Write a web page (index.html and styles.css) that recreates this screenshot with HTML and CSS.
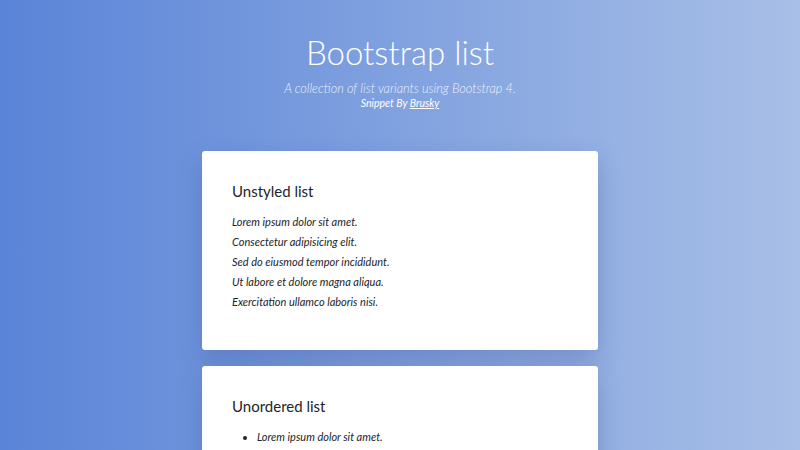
FILE: index.html
```html
<!DOCTYPE html>
<html lang="en">
<head>
    <meta charset="UTF-8">
    <meta name="viewport" content="width=device-width, initial-scale=1.0">
    <title>Bootstrap list</title>
    <link rel="stylesheet" href="styles.css">
</head>
<body>
    <div class="container">
        <header class="hero">
            <h1>Bootstrap list</h1>
            <p class="lead">A collection of list variants using Bootstrap 4.</p>
            <p class="credit">Snippet By <a href="#">Brusky</a></p>
        </header>

        <div class="card">
            <h5>Unstyled list</h5>
            <ul class="list-unstyled">
                <li>Lorem ipsum dolor sit amet.</li>
                <li>Consectetur adipisicing elit.</li>
                <li>Sed do eiusmod tempor incididunt.</li>
                <li>Ut labore et dolore magna aliqua.</li>
                <li>Exercitation ullamco laboris nisi.</li>
            </ul>
        </div>

        <div class="card">
            <h5>Unordered list</h5>
            <ul class="list-bullets">
                <li>Lorem ipsum dolor sit amet.</li>
                <li>Consectetur adipisicing elit.</li>
                <li>Sed do eiusmod tempor incididunt.</li>
                <li>Ut labore et dolore magna aliqua.</li>
                <li>Exercitation ullamco laboris nisi.</li>
            </ul>
        </div>
    </div>
</body>
</html>
```

FILE: styles.css
```css
html, body {
    margin: 0;
    padding: 0;
}
body {
    font-family: 'Lato', 'Open Sans', sans-serif;
    color: #212529;
    min-height: 100vh;
    background: linear-gradient(to right, #5a84d8, #a8bfe7);
}
.container {
    width: 396px;
    margin: 0 auto;
    padding-top: 28px;
}
.hero {
    text-align: center;
    color: #fff;
    margin-bottom: 41px;
}
.hero h1 {
    font-weight: 300;
    font-size: 33px;
    margin: 0;
    line-height: 48px;
}
.lead {
    font-style: italic;
    font-weight: 300;
    font-size: 12.7px;
    line-height: 16px;
    margin: 4px 0 0;
    color: rgba(255, 255, 255, 0.88);
}
.credit {
    font-style: italic;
    font-size: 10.5px;
    line-height: 13px;
    margin: 1px 0 0;
}
.credit a {
    color: #fff;
}
.card {
    background: #fff;
    border-radius: 3px;
    padding: 29px 30px 38px;
    margin-bottom: 16px;
    box-shadow: 0 10px 24px rgba(40, 60, 130, 0.25);
}
.card h5 {
    font-size: 15px;
    font-weight: 400;
    margin: 0 0 10px;
    line-height: 22px;
}
.card ul {
    margin: 0;
    font-style: italic;
    font-size: 11px;
    line-height: 20px;
}
.list-unstyled {
    list-style: none;
    padding: 0;
}
.list-bullets {
    padding-left: 25px;
}
```
